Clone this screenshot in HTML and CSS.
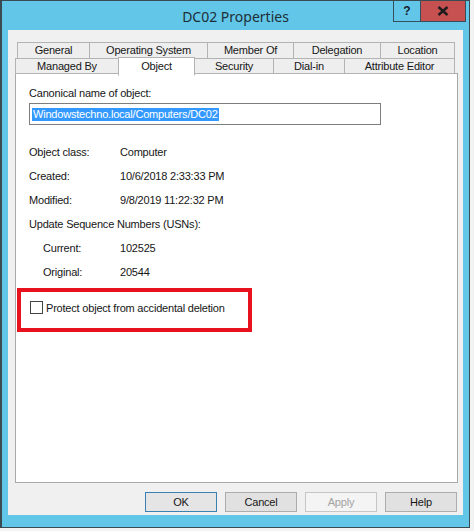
FILE: index.html
```html
<!DOCTYPE html>
<html>
<head>
<meta charset="utf-8">
<link rel="stylesheet" href="styles.css">
</head>
<body>
<div class="window">
  <div class="titlebar">
    <div></div>
    <div class="title">DC02 Properties</div>
    <div class="caps">
      <div class="cap cap-help">?</div>
      <div class="cap cap-close">
        <svg width="12" height="10" viewBox="0 0 12 10"><path d="M1.5 1 L10.5 9 M10.5 1 L1.5 9" stroke="#1c1c1c" stroke-width="2.4" fill="none"/></svg>
      </div>
    </div>
  </div>
  <div class="client">
    <div class="tabrow row1">
      <div class="tab t-general">General</div>
      <div class="tab t-os">Operating System</div>
      <div class="tab t-member">Member Of</div>
      <div class="tab t-deleg">Delegation</div>
      <div class="tab t-loc">Location</div>
    </div>
    <div class="tabrow row2">
      <div class="tab t-managed">Managed By</div>
      <div class="tab t-object selected">Object</div>
      <div class="tab t-security">Security</div>
      <div class="tab t-dial">Dial-in</div>
      <div class="tab t-attr">Attribute Editor</div>
    </div>
    <div class="panel">
      <div class="field-label">Canonical name of object:</div>
      <div class="textbox"><span class="sel">Windowstechno.local/Computers/DC02</span></div>
      <div class="info">
        <div class="info-row"><span class="k">Object class:</span><span class="v">Computer</span></div>
        <div class="info-row"><span class="k">Created:</span><span class="v">10/6/2018 2:33:33 PM</span></div>
        <div class="info-row"><span class="k">Modified:</span><span class="v">9/8/2019 11:22:32 PM</span></div>
        <div class="info-row"><span class="k">Update Sequence Numbers (USNs):</span></div>
        <div class="info-row sub"><span class="k">Current:</span><span class="v">102525</span></div>
        <div class="info-row sub"><span class="k">Original:</span><span class="v">20544</span></div>
      </div>
      <div class="highlight">
        <span class="checkbox"></span>
        <span class="check-label">Protect object from accidental deletion</span>
      </div>
    </div>
    <div class="buttons">
      <div class="btn btn-default">OK</div>
      <div class="btn">Cancel</div>
      <div class="btn btn-disabled">Apply</div>
      <div class="btn">Help</div>
    </div>
  </div>
</div>
</body>
</html>
```

FILE: styles.css
```css
* { box-sizing: border-box; }

html, body {
  margin: 0;
  padding: 0;
}

body {
  background: #f3f3f3;
  font-family: "Liberation Sans", Arial, sans-serif;
  font-size: 11px;
  letter-spacing: -0.2px;
  color: #161616;
  width: 474px;
  height: 531px;
  overflow: hidden;
}

.window {
  width: 470px;
  height: 528px;
  background: #62c6e8;
  border-top: 1px solid #3b4b52;
  border-left: 2px solid #3b4b52;
  border-right: 1px solid #3b4b52;
  border-bottom: 1px solid #3b4b52;
  padding: 0 6px 12px 6px;
  display: flex;
  flex-direction: column;
}

.titlebar {
  height: 29px;
  display: grid;
  grid-template-columns: 1fr auto 1fr;
  align-items: start;
  margin: 0 -6px;
}

.title {
  font-family: "Noto Sans", "Open Sans", sans-serif;
  font-size: 14px;
  letter-spacing: 0;
  color: #1d2e37;
  line-height: 30px;
  padding-top: 1px;
}

.caps {
  justify-self: end;
  display: flex;
  margin-right: 3px;
}

.cap {
  height: 21px;
  border: 1px solid #35505c;
  border-top: none;
  display: flex;
  align-items: center;
  justify-content: center;
}

.cap-help {
  width: 28px;
  background: #62c6e8;
  font-weight: bold;
  font-size: 12px;
  letter-spacing: 0;
  color: #15232a;
}

.cap-close {
  width: 46px;
  margin-left: -1px;
  background: #c75050;
}

.client {
  height: 485px;
  background: #f0f0f0;
  padding-top: 12px;
  display: flex;
  flex-direction: column;
}

.tabrow {
  display: flex;
}

.row1 {
  margin-left: 9px;
  height: 17px;
}

.row2 {
  margin-left: 7px;
  margin-top: -1px;
  height: 16px;
  align-items: flex-end;
  position: relative;
  z-index: 2;
}

.tab {
  height: 100%;
  border: 1px solid #b3b3b3;
  background: #eeeeee;
  text-align: center;
  line-height: 14px;
  margin-left: -1px;
  white-space: nowrap;
}

.tab:first-child { margin-left: 0; }

.row2 .tab { height: 16px; }

.tab.selected {
  background: #ffffff;
  border-bottom-color: #ffffff;
  height: 19px;
  margin-bottom: -2px;
  line-height: 16px;
  position: relative;
  z-index: 3;
}

.t-general { width: 73px; }
.t-os { width: 119px; }
.t-member { width: 87px; }
.t-deleg { width: 88px; }
.t-loc { width: 75px; }

.t-managed { width: 104px; }
.t-object { width: 77px; }
.t-security { width: 80px; }
.t-dial { width: 72px; }
.t-attr { width: 111px; }

.panel {
  margin-left: 7px;
  margin-top: -1px;
  width: 443px;
  height: 410px;
  background: #ffffff;
  border: 1px solid #a9a9a9;
  position: relative;
  z-index: 1;
}

.field-label {
  margin: 12px 0 0 13px;
  line-height: 14px;
}

.textbox {
  margin: 3px 0 0 13px;
  width: 352px;
  height: 22px;
  border: 1px solid #7d7d7d;
  padding-left: 2px;
  display: flex;
  align-items: center;
}

.sel {
  background: #3399ff;
  color: #ffffff;
  line-height: 13px;
  padding: 0 1px;
}

.info {
  margin-top: 15px;
}

.info-row {
  display: flex;
  line-height: 24px;
  padding-left: 13px;
  white-space: nowrap;
}

.info-row .k { width: 91px; }

.info-row.sub { padding-left: 27px; }
.info-row.sub .k { width: 77px; }

.highlight {
  margin: 4px 0 0 1px;
  width: 235px;
  height: 44px;
  border: 4px solid #e8121f;
  display: flex;
  align-items: center;
  padding-left: 9px;
  padding-bottom: 5px;
}

.checkbox {
  width: 13px;
  height: 13px;
  border: 1px solid #444444;
  background: #ffffff;
  flex: none;
}

.check-label {
  margin-left: 3px;
}

.buttons {
  margin-top: 9px;
  display: flex;
  justify-content: flex-end;
  gap: 8px;
  padding-right: 6px;
}

.btn {
  width: 72px;
  height: 20px;
  border: 1px solid #acacac;
  background: #e1e1e1;
  text-align: center;
  line-height: 18px;
}

.btn-default {
  border-color: #3c7fb1;
  background: #e5e5e5;
}

.btn-disabled {
  border-color: #c6c6c6;
  background: #f4f4f4;
  color: #a3a3a3;
}
```
